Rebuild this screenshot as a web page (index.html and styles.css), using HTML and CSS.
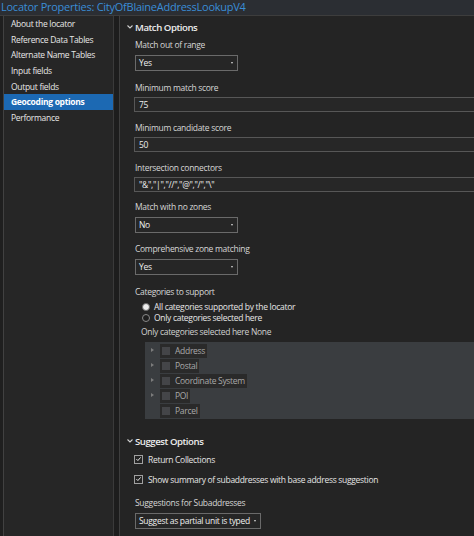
FILE: index.html
```html
<!DOCTYPE html>
<html>
<head>
<meta charset="utf-8">
<link rel="stylesheet" href="styles.css">
</head>
<body>
<div class="titlebar">Locator Properties: CityOfBlaineAddressLookupV4</div>
<div class="layout">
  <nav class="sidebar">
    <div class="nav-item">About the locator</div>
    <div class="nav-item">Reference Data Tables</div>
    <div class="nav-item">Alternate Name Tables</div>
    <div class="nav-item">Input fields</div>
    <div class="nav-item">Output fields</div>
    <div class="nav-item active">Geocoding options</div>
    <div class="nav-item">Performance</div>
  </nav>
  <div class="splitter"></div>
  <main class="content">
    <div class="section-head">
      <svg class="chev" width="8" height="6" viewBox="0 0 8 6"><path d="M1.5 1.5 L4 4 L6.5 1.5" fill="none" stroke="#cfcfcf" stroke-width="1.1"/></svg>
      <span>Match Options</span>
    </div>

    <div class="field f-first">
      <div class="label">Match out of range</div>
      <div class="select">Yes<span class="arrow"></span></div>
    </div>
    <div class="field f-11">
      <div class="label tight">Minimum match score</div>
      <div class="input">75</div>
    </div>
    <div class="field f-10">
      <div class="label tight">Minimum candidate score</div>
      <div class="input">50</div>
    </div>
    <div class="field f-10">
      <div class="label tight">Intersection connectors</div>
      <div class="input">"&amp;","|","//","@","/","\"</div>
    </div>
    <div class="field f-9">
      <div class="label">Match with no zones</div>
      <div class="select">No<span class="arrow"></span></div>
    </div>
    <div class="field f-10">
      <div class="label">Comprehensive zone matching</div>
      <div class="select">Yes<span class="arrow"></span></div>
    </div>
    <div class="field f-11">
      <div class="label nomb">Categories to support</div>
      <div class="radios">
        <div class="radio-row"><span class="radio checked"></span>All categories supported by the locator</div>
        <div class="radio-row"><span class="radio"></span>Only categories selected here</div>
      </div>
      <div class="sublabel">Only categories selected here None</div>
      <div class="tree">
        <div class="tree-row"><span class="expander"></span><span class="tree-item"><span class="tbox"></span>Address</span></div>
        <div class="tree-row"><span class="expander"></span><span class="tree-item"><span class="tbox"></span>Postal</span></div>
        <div class="tree-row"><span class="expander"></span><span class="tree-item"><span class="tbox"></span>Coordinate System</span></div>
        <div class="tree-row"><span class="expander"></span><span class="tree-item"><span class="tbox"></span>POI</span></div>
        <div class="tree-row"><span class="expander none"></span><span class="tree-item"><span class="tbox"></span>Parcel</span></div>
      </div>
    </div>

    <div class="section-head second">
      <svg class="chev" width="8" height="6" viewBox="0 0 8 6"><path d="M1.5 1.5 L4 4 L6.5 1.5" fill="none" stroke="#cfcfcf" stroke-width="1.1"/></svg>
      <span>Suggest Options</span>
    </div>
    <div class="check-row">
      <span class="check"><svg width="9" height="9" viewBox="0 0 9 9"><path d="M1.8 4.6 L3.7 6.5 L7.3 2.4" fill="none" stroke="#f0f0f0" stroke-width="1.2"/></svg></span>
      Return Collections
    </div>
    <div class="check-row">
      <span class="check"><svg width="9" height="9" viewBox="0 0 9 9"><path d="M1.8 4.6 L3.7 6.5 L7.3 2.4" fill="none" stroke="#f0f0f0" stroke-width="1.2"/></svg></span>
      Show summary of subaddresses with base address suggestion
    </div>
    <div class="field f-last">
      <div class="label">Suggestions for Subaddresses</div>
      <div class="select wide">Suggest as partial unit is typed<span class="arrow"></span></div>
    </div>
  </main>
</div>
</body>
</html>
```

FILE: styles.css
```css
* { box-sizing: border-box; }

body {
  margin: 0;
  width: 474px;
  height: 536px;
  overflow: hidden;
  background: #1f1f1f;
  font-family: "Open Sans", "Noto Sans", sans-serif;
  font-size: 8.5px;
  letter-spacing: -0.3px;
  color: #dcdcdc;
}

.titlebar {
  height: 16px;
  line-height: 14px;
  padding-left: 1px;
  background: #2b2e33;
  color: #3a8dd6;
  font-size: 11px;
  letter-spacing: -0.25px;
  white-space: nowrap;
  overflow: hidden;
  border-bottom: 1px solid #3d3d3d;
}

.layout {
  display: flex;
  height: 520px;
}

.sidebar {
  margin-left: 3px;
  width: 111px;
  background: #262626;
  border-left: 1px solid #414141;
  border-right: 1px solid #3a3a3a;
  flex-shrink: 0;
}

.nav-item {
  height: 15.7px;
  line-height: 15.7px;
  padding-left: 7px;
  color: #e6e6e6;
  white-space: nowrap;
}

.nav-item.active {
  background: #1c69b3;
  color: #ffffff;
  font-weight: 700;
}

.splitter {
  width: 5px;
  background: #1d1d1d;
  flex-shrink: 0;
}

.content {
  flex: 1;
  min-width: 0;
  background: #242424;
  border-left: 1px solid #3e3e3e;
  padding: 4px 0 0 6px;
  overflow: hidden;
}

.section-head {
  display: flex;
  align-items: center;
  height: 14px;
  font-size: 9.6px;
  font-weight: 600;
  letter-spacing: -0.45px;
  color: #ececec;
}

.section-head.second {
  margin-top: 15px;
}

.chev {
  width: 8px;
  margin-right: 1px;
  flex-shrink: 0;
}

.field {
  padding-left: 9px;
}

.f-first { margin-top: 5px; }
.f-9 { margin-top: 9px; }
.f-10 { margin-top: 10px; }
.f-11 { margin-top: 11px; }
.f-last { margin-top: 8px; }

.label {
  height: 12px;
  line-height: 12px;
  margin-bottom: 4px;
  color: #d6d6d6;
  white-space: nowrap;
}

.label.tight { margin-bottom: 3px; }
.label.nomb { margin-bottom: 0; }

.select {
  position: relative;
  width: 103px;
  height: 16px;
  line-height: 14px;
  padding-left: 3px;
  border: 1px solid #6a6a6a;
  background: #262626;
  color: #efefef;
  white-space: nowrap;
}

.select.wide { width: 126px; }

.arrow {
  position: absolute;
  right: 4px;
  top: 6px;
  width: 0;
  height: 0;
  border-left: 1.5px solid transparent;
  border-right: 1.5px solid transparent;
  border-top: 2px solid #d8d8d8;
}

.input {
  height: 15px;
  line-height: 13px;
  margin-left: -1px;
  margin-right: -20px;
  padding-left: 4px;
  border: 1px solid #575757;
  background: #272727;
  color: #ececec;
  white-space: nowrap;
}

.radios {
  margin-top: 3px;
  padding-left: 7px;
}

.radio-row {
  display: flex;
  align-items: center;
  height: 11px;
  color: #e6e6e6;
  white-space: nowrap;
}

.radio {
  width: 8px;
  height: 8px;
  border-radius: 50%;
  border: 1px solid #8a8a8a;
  background: #1e1e1e;
  margin-right: 4px;
  flex-shrink: 0;
}

.radio.checked {
  background: #eeeeee;
  border: 1.5px solid #6a6a6a;
}

.sublabel {
  height: 12px;
  line-height: 12px;
  margin-top: 3px;
  margin-bottom: 4px;
  padding-left: 6px;
  color: #d0d0d0;
  white-space: nowrap;
}

.tree {
  margin-left: 10px;
  margin-right: -20px;
  height: 77px;
  padding-top: 1px;
  background: #3a3d40;
}

.tree-row {
  display: flex;
  align-items: center;
  height: 15px;
}

.expander {
  width: 15px;
  height: 15px;
  flex-shrink: 0;
  position: relative;
}

.expander::before {
  content: "";
  position: absolute;
  left: 6px;
  top: 5px;
  width: 0;
  height: 0;
  border-top: 2.5px solid transparent;
  border-bottom: 2.5px solid transparent;
  border-left: 3px solid #7c7c7c;
}

.expander.none::before { display: none; }

.tree-item {
  display: flex;
  align-items: center;
  height: 14px;
  padding-left: 2px;
  padding-right: 2px;
  background: #2a2a2a;
  color: #a9a9a9;
  white-space: nowrap;
}

.tbox {
  width: 8px;
  height: 8px;
  background: #444548;
  margin-right: 5px;
}

.check-row {
  display: flex;
  align-items: center;
  height: 20px;
  padding-left: 8px;
  margin-top: 1px;
  color: #e4e4e4;
  white-space: nowrap;
}

.check-row + .check-row { margin-top: 0; }

.check {
  width: 9px;
  height: 9px;
  border: 1px solid #a0a0a0;
  margin-right: 5px;
  display: flex;
  align-items: center;
  justify-content: center;
  flex-shrink: 0;
}

.check svg {
  width: 8px;
  height: 8px;
}
```
